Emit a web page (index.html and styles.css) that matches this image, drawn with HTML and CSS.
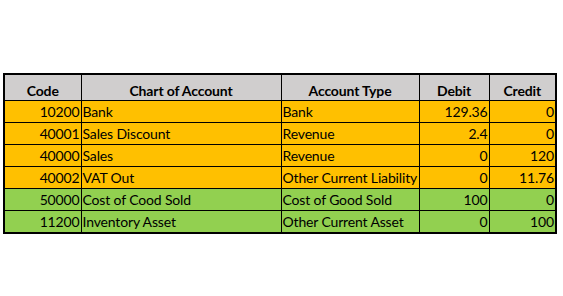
FILE: index.html
```html
<!DOCTYPE html>
<html>
<head>
<meta charset="utf-8">
<link rel="stylesheet" href="styles.css">
</head>
<body>
<div class="page">
<table class="sheet">
  <colgroup>
    <col class="c1"><col class="c2"><col class="c3"><col class="c4"><col class="c5">
  </colgroup>
  <thead>
    <tr class="head"><th>Code</th><th>Chart of Account</th><th>Account Type</th><th>Debit</th><th>Credit</th></tr>
  </thead>
  <tbody>
    <tr class="orange"><td class="num">10200</td><td>Bank</td><td>Bank</td><td class="num">129.36</td><td class="num">0</td></tr>
    <tr class="orange"><td class="num">40001</td><td>Sales Discount</td><td>Revenue</td><td class="num">2.4</td><td class="num">0</td></tr>
    <tr class="orange"><td class="num">40000</td><td>Sales</td><td>Revenue</td><td class="num">0</td><td class="num">120</td></tr>
    <tr class="orange"><td class="num">40002</td><td>VAT Out</td><td>Other Current Liability</td><td class="num">0</td><td class="num">11.76</td></tr>
    <tr class="green"><td class="num">50000</td><td>Cost of Cood Sold</td><td>Cost of Good Sold</td><td class="num">100</td><td class="num">0</td></tr>
    <tr class="green"><td class="num">11200</td><td>Inventory Asset</td><td>Other Current Asset</td><td class="num">0</td><td class="num">100</td></tr>
  </tbody>
</table>
</div>
</body>
</html>
```
FILE: styles.css
```css
html, body {
  margin: 0;
  padding: 0;
  background: #ffffff;
}
.page {
  padding: 73px 0 0 3px;
}
.sheet {
  border-collapse: collapse;
  border: 2px solid #000;
  table-layout: fixed;
  width: 554px;
  font-family: Lato, "Liberation Sans", sans-serif;
  font-size: 14px;
  letter-spacing: -0.15px;
  color: #000;
}
.c1 { width: 77px; }
.c2 { width: 200px; }
.c3 { width: 138px; }
.c4 { width: 70px; }
.c5 { width: 67px; }
.sheet th, .sheet td {
  border: 1px solid #000;
  padding: 0 1px 0 1px;
  white-space: nowrap;
  overflow: hidden;
  vertical-align: bottom;
}
.head th {
  background: #d0cece;
  font-weight: bold;
  text-align: center;
  line-height: 19px;
  padding-top: 6px;
  padding-bottom: 0;
}
.sheet td {
  line-height: 21px;
}
.orange td { background: #ffc000; }
.green td { background: #92d050; }
.sheet td.num { text-align: right; }
```
